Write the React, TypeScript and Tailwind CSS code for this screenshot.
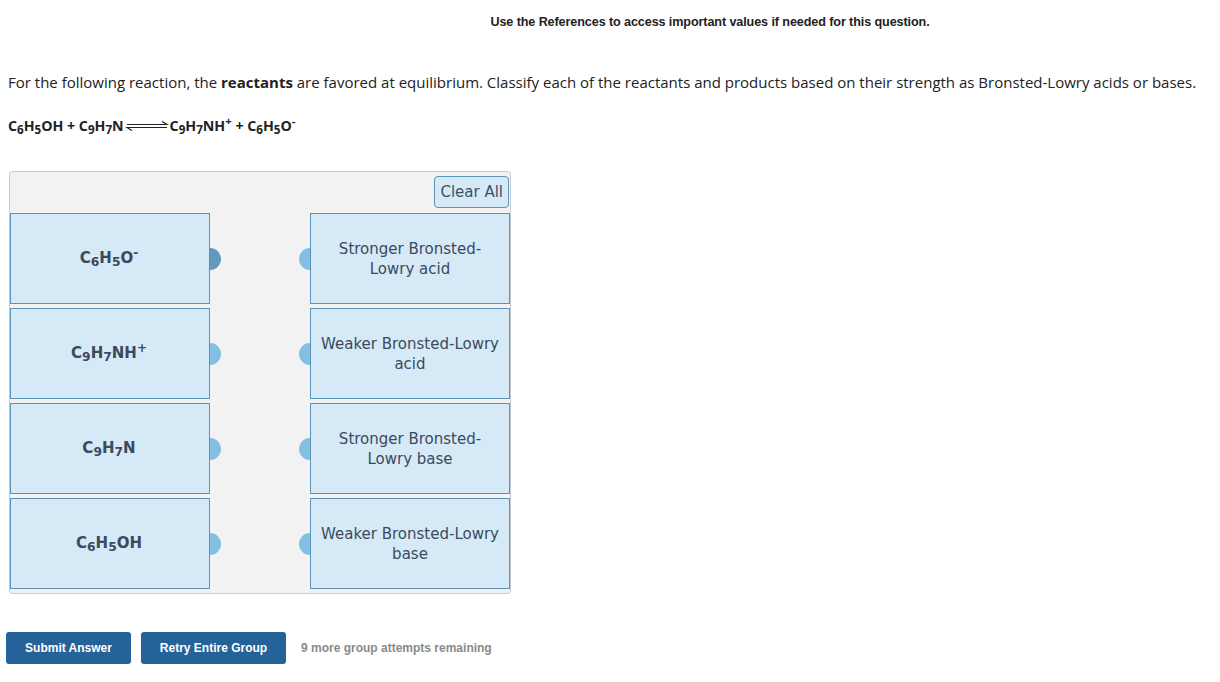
import React from "react";

const sans = { fontFamily: '"Open Sans", "Noto Sans", sans-serif' };
const verdana = { fontFamily: '"DejaVu Sans", Verdana, sans-serif' };
const arial = { fontFamily: '"Liberation Sans", Arial, sans-serif' };

function EqArrow() {
  return (
    <svg width="44" height="10" viewBox="0 0 44 10" className="mx-[1px]">
      <path d="M2 3.5 H42 L37 0.5" fill="none" stroke="#222" strokeWidth="1.2" />
      <path d="M42 6.5 H2 L7 9.5" fill="none" stroke="#222" strokeWidth="1.2" />
    </svg>
  );
}

const Sub = ({ children }: { children: React.ReactNode }) => (
  <sub className="text-[0.82em] relative top-[0.25em] align-baseline">{children}</sub>
);
const Sup = ({ children }: { children: React.ReactNode }) => (
  <sup className="text-[0.8em] relative -top-[0.5em] align-baseline">{children}</sup>
);

const leftItems: { label: React.ReactNode; dark?: boolean }[] = [
  {
    label: (
      <>
        C<Sub>6</Sub>H<Sub>5</Sub>O<Sup>-</Sup>
      </>
    ),
    dark: true,
  },
  {
    label: (
      <>
        C<Sub>9</Sub>H<Sub>7</Sub>NH<Sup>+</Sup>
      </>
    ),
  },
  {
    label: (
      <>
        C<Sub>9</Sub>H<Sub>7</Sub>N
      </>
    ),
  },
  {
    label: (
      <>
        C<Sub>6</Sub>H<Sub>5</Sub>OH
      </>
    ),
  },
];

const rightItems = [
  "Stronger Bronsted-Lowry acid",
  "Weaker Bronsted-Lowry acid",
  "Stronger Bronsted-Lowry base",
  "Weaker Bronsted-Lowry base",
];

export default function App() {
  return (
    <div className="w-[1220px] h-[682px] bg-white overflow-hidden text-[#222]" style={sans}>
      <div className="h-[40px] flex justify-center items-start pt-[13px]">
        <p className="text-[12.6px] font-bold ml-[200px] tracking-[-0.1px]" style={arial}>
          Use the References to access important values if needed for this question.
        </p>
      </div>

      <p className="mt-[31px] ml-[8px] text-[15px] leading-[22px]">
        For the following reaction, the <b>reactants</b> are favored at equilibrium. Classify each of the
        reactants and products based on their strength as Bronsted-Lowry acids or bases.
      </p>

      <div className="mt-[22px] ml-[8px] flex items-center text-[14.2px] font-bold leading-[22px]">
        <span>
          C<Sub>6</Sub>H<Sub>5</Sub>OH + C<Sub>9</Sub>H<Sub>7</Sub>N
        </span>
        <EqArrow />
        <span>
          C<Sub>9</Sub>H<Sub>7</Sub>NH<Sup>+</Sup> + C<Sub>6</Sub>H<Sub>5</Sub>O<Sup>-</Sup>
        </span>
      </div>

      <div className="mt-[34px] ml-[9px] w-[502px] h-[423px] bg-[#f2f2f2] border border-[#c8ccd0] rounded-[3px] flex flex-col">
        <div className="flex justify-end pt-[4px] pr-[1px]">
          <button
            className="h-[32px] px-[5px] bg-[#d5e9f6] border border-[#5a93ba] rounded-[4px] text-[15px] text-[#3c5268]"
            style={verdana}
          >
            Clear All
          </button>
        </div>
        <div className="flex justify-between mt-[5px]">
          <div className="flex flex-col gap-[4px]">
            {leftItems.map((item, i) => (
              <div key={i} className="relative w-[200px] h-[91px]">
                <div
                  className="w-full h-full bg-[#d5e9f6] border border-[#5a93ba] flex items-center justify-center font-bold text-[15px] text-[#3b4a5e] pr-[2px]"
                  style={verdana}
                >
                  <span>{item.label}</span>
                </div>
                <div className="absolute right-[-11px] top-1/2 -translate-y-1/2 w-[11px] h-[22px] overflow-hidden">
                  <div
                    className={`w-[22px] h-[22px] rounded-full -ml-[11px] ${
                      item.dark ? "bg-[#6199bf]" : "bg-[#83bfe2]"
                    }`}
                  />
                </div>
              </div>
            ))}
          </div>
          <div className="flex flex-col gap-[4px]">
            {rightItems.map((t, i) => (
              <div key={i} className="relative w-[200px] h-[91px]">
                <div className="absolute left-[-11px] top-1/2 -translate-y-1/2 w-[11px] h-[22px] overflow-hidden">
                  <div className="w-[22px] h-[22px] rounded-full bg-[#83bfe2]" />
                </div>
                <div
                  className="w-full h-full bg-[#d5e9f6] border border-[#5a93ba] flex items-center justify-center text-center px-[8px] text-[15px] leading-[20px] text-[#3b4a5e]"
                  style={verdana}
                >
                  {t}
                </div>
              </div>
            ))}
          </div>
        </div>
      </div>

      <div className="mt-[38px] ml-[6px] flex items-center" style={arial}>
        <button className="h-[32px] w-[125px] bg-[#25629a] rounded-[3px] text-white text-[12px] font-bold">
          Submit Answer
        </button>
        <button className="ml-[10px] h-[32px] w-[145px] bg-[#25629a] rounded-[3px] text-white text-[12px] font-bold">
          Retry Entire Group
        </button>
        <span className="ml-[15px] text-[12px] font-bold text-[#8a8a8a]">9 more group attempts remaining</span>
      </div>
    </div>
  );
}
